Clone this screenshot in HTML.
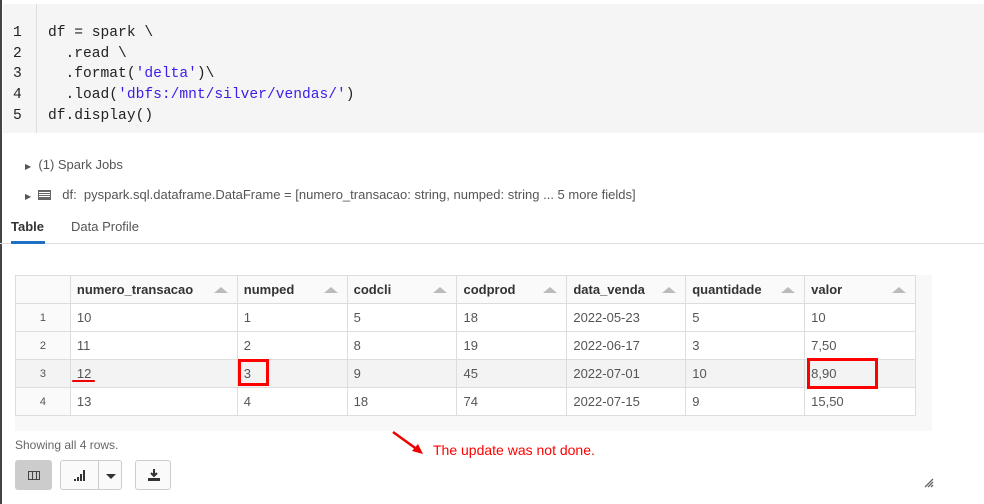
<!DOCTYPE html>
<html><head><style>
*{margin:0;padding:0;box-sizing:border-box}
body{width:984px;height:504px;background:#fff;position:relative;overflow:hidden;font-family:"Liberation Sans","DejaVu Sans",sans-serif;color:#333}
.abs{position:absolute}
.code{left:3px;top:4px;width:981px;height:129px;background:#f5f5f5}
.gut{left:36px;top:4px;width:1px;height:129px;background:#ddd}
.ln,.cd{font-family:"Liberation Mono","DejaVu Sans Mono",monospace;font-size:14.6px;line-height:20.7px;white-space:pre;color:#222}
.s{color:#3a1ee8}
table{border-collapse:collapse;font-size:13px}
td,th{border:1px solid #ddd;height:28px;padding:0 6px;text-align:left;white-space:nowrap;color:#555}
th{font-weight:bold;color:#333;background:#fafafa;position:relative}
th .tri{position:absolute;right:9px;top:11px;width:0;height:0;border-left:7px solid transparent;border-right:7px solid transparent;border-bottom:6px solid #bbb}
td.n{text-align:center;font-size:11px;background:#fafafa}
tr.g td{background:#f3f3f3}
.btn{border:1px solid #ccc;border-radius:3px;background:#fafafa;height:30px;top:460px}
</style></head><body>
<div class="abs" style="left:0;top:0;width:2px;height:504px;background:#444"></div>
<div class="abs code"></div>
<div class="abs gut"></div>
<div class="abs ln" style="left:13px;top:23px">1
2
3
4
5</div>
<div class="abs cd" style="left:48px;top:23px">df = spark \
  .read \
  .format(<span class="s">'delta'</span>)\
  .load(<span class="s">'dbfs:/mnt/silver/vendas/'</span>)
df.display()</div>
<div class="abs" style="left:25px;top:157px;font-size:13px;color:#555"><span style="font-size:8px;color:#555">▶</span>&nbsp; (1) Spark Jobs</div>
<div class="abs" style="left:25px;top:187px;font-size:13px;color:#555"><span style="font-size:8px">▶</span>&nbsp; <span style="display:inline-block;width:13px;height:10px;border:1px solid #666;border-width:2px 1px;vertical-align:-1px;background:repeating-linear-gradient(#fff 0 1px,#666 1px 2px)"></span>&nbsp;&nbsp; df:&nbsp; pyspark.sql.dataframe.DataFrame = [numero_transacao: string, numped: string ... 5 more fields]</div>
<div class="abs" style="left:11px;top:219px;font-size:13px;font-weight:bold;color:#333">Table</div>
<div class="abs" style="left:71px;top:219px;font-size:13px;color:#555">Data Profile</div>
<div class="abs" style="left:0;top:243px;width:984px;height:1px;background:#ddd"></div>
<div class="abs" style="left:11px;top:241px;width:34px;height:3px;background:#1f6fc5"></div>
<div class="abs" style="left:15px;top:275px;width:917px;height:156px;background:#f8f8f8"></div>
<table class="abs" style="left:15px;top:275px;width:901px;background:#fff">
<colgroup><col style="width:55px"><col style="width:167px"><col style="width:110px"><col style="width:110px"><col style="width:110px"><col style="width:119px"><col style="width:119px"><col style="width:111px"></colgroup>
<tr><th></th><th>numero_transacao<i class="tri"></i></th><th>numped<i class="tri"></i></th><th>codcli<i class="tri"></i></th><th>codprod<i class="tri"></i></th><th>data_venda<i class="tri"></i></th><th>quantidade<i class="tri"></i></th><th>valor<i class="tri"></i></th></tr>
<tr><td class="n">1</td><td>10</td><td>1</td><td>5</td><td>18</td><td>2022-05-23</td><td>5</td><td>10</td></tr>
<tr><td class="n">2</td><td>11</td><td>2</td><td>8</td><td>19</td><td>2022-06-17</td><td>3</td><td>7,50</td></tr>
<tr class="g"><td class="n">3</td><td>12</td><td>3</td><td>9</td><td>45</td><td>2022-07-01</td><td>10</td><td>8,90</td></tr>
<tr><td class="n">4</td><td>13</td><td>4</td><td>18</td><td>74</td><td>2022-07-15</td><td>9</td><td>15,50</td></tr>
</table>
<div class="abs" style="left:72px;top:380px;width:23px;height:2px;background:#e00;border-radius:1px"></div>
<div class="abs" style="left:238px;top:359px;width:31px;height:27px;border:3px solid #f00"></div>
<div class="abs" style="left:807px;top:358px;width:71px;height:31px;border:3px solid #f00"></div>
<div class="abs" style="left:15px;top:438px;font-size:12px;color:#666">Showing all 4 rows.</div>
<svg class="abs" style="left:390px;top:428px" width="40" height="30"><line x1="3" y1="4" x2="28" y2="22" stroke="#e00" stroke-width="2.5"/><polygon points="33,26 22,23 28,16" fill="#e00"/></svg>
<div class="abs" style="left:433px;top:442px;font-size:14px;color:#f00">The update was not done.</div>
<div class="abs btn" style="left:15px;width:37px;background:#ccc;border-color:#ccc"><div class="abs" style="left:12px;top:10px;width:12px;height:9px;border:1px solid #444;background:repeating-linear-gradient(90deg,#ccc 0 3px,#444 3px 4px)"></div></div>
<div class="abs btn" style="left:60px;width:62px"><div class="abs" style="left:37px;top:0;width:1px;height:28px;background:#ccc"></div><svg class="abs" style="left:12px;top:7px" width="14" height="14"><rect x="1" y="11" width="2" height="2" fill="#333"/><rect x="4" y="9" width="2" height="4" fill="#333"/><rect x="7" y="6" width="2" height="7" fill="#333"/><rect x="10" y="2" width="2" height="11" fill="#333"/></svg><div class="abs" style="left:45px;top:13px;border-left:5px solid transparent;border-right:5px solid transparent;border-top:5px solid #333"></div></div>
<div class="abs btn" style="left:135px;width:36px"><svg class="abs" style="left:11px;top:7px" width="14" height="14"><path d="M7 1v7M4 5l3 3 3-3" stroke="#333" stroke-width="2" fill="none"/><rect x="1" y="10" width="12" height="3" fill="#333"/></svg></div>
<svg class="abs" style="left:924px;top:478px" width="10" height="10"><path d="M9 1L1 9M9 4L4 9M9 7L7 9" stroke="#666" stroke-width="1.3"/></svg>
</body></html>
